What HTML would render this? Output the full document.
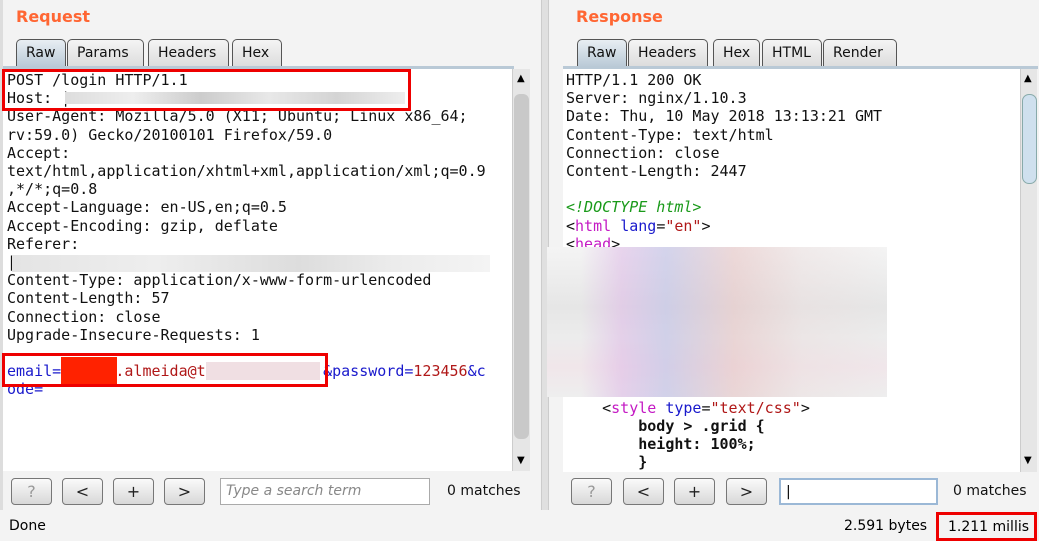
<!DOCTYPE html>
<html><head><style>
*{margin:0;padding:0;box-sizing:border-box}
body{width:1039px;height:541px;background:#f3f3f3;font-family:"DejaVu Sans","Liberation Sans",sans-serif;position:relative;overflow:hidden}
.a{position:absolute}
.title{color:#ff6633;font-weight:bold;font-size:16px}
.tab{position:absolute;top:39px;height:28px;border:1px solid #555;border-bottom:none;border-radius:5px 5px 0 0;background:linear-gradient(#f4f4f4,#dcdcdc);font-size:14px;padding:5px 9px 0;color:#111}
.tab.sel{background:linear-gradient(#e8eef3,#b9c9d6)}
.ed{position:absolute;background:#fff;font-family:"DejaVu Sans Mono","Liberation Mono",monospace;font-size:15px;line-height:18.2px;white-space:pre;color:#111;overflow:hidden}
.sb{position:absolute;background:#e6e6e6;border-left:1px solid #ccc}
.btn{position:absolute;top:478px;width:41px;height:27px;border:1px solid #777;border-radius:4px;background:linear-gradient(#fafafa,#d8d8d8);text-align:center;font-size:16px;line-height:25px;color:#222}
.inp{position:absolute;top:478px;height:27px;background:#fff;border:1px solid #aaa;font-size:14px;padding:4px 5px;font-style:italic;color:#888}
.m{position:absolute;top:483px;font-size:14px;color:#111}
.bl{color:#1a1acc}.rd{color:#b01818}.gr{color:#1a9a1a;font-style:italic}.pk{color:#c41ac4}
.px{position:absolute}
</style></head><body>
<div class="a" style="left:0;top:0;width:3px;height:510px;background:#ddd"></div>
<div class="a title" style="left:16px;top:7px">Request</div>
<div class="tab sel" style="left:16px;width:50px">Raw</div>
<div class="tab" style="left:67px;width:77px">Params</div>
<div class="tab" style="left:148px;width:81px">Headers</div>
<div class="tab" style="left:232px;width:50px">Hex</div>
<div class="a" style="left:3px;top:66px;width:511px;height:3px;background:#b9c9d6"></div>
<div class="ed" style="left:3px;top:69px;width:509px;height:402px;padding:2px 4px">POST /login HTTP/1.1
Host: |
User-Agent: Mozilla/5.0 (X11; Ubuntu; Linux x86_64;
rv:59.0) Gecko/20100101 Firefox/59.0
Accept:
text/html,application/xhtml+xml,application/xml;q=0.9
,*/*;q=0.8
Accept-Language: en-US,en;q=0.5
Accept-Encoding: gzip, deflate
Referer:
|
Content-Type: application/x-www-form-urlencoded
Content-Length: 57
Connection: close
Upgrade-Insecure-Requests: 1

<span class="bl">email=</span>      <span class="rd">.almeida@t</span>             <span class="bl">&amp;password=</span><span class="rd">123456</span><span class="bl">&amp;c
ode=</span></div>
<div class="px" style="left:65px;top:92px;width:340px;height:12px;background:linear-gradient(90deg,#ddd,#eee 20%,#ccc 40%,#e8e8e8 60%,#d4d4d4 80%,#eee)"></div>
<div class="px" style="left:12px;top:255px;width:478px;height:17px;background:linear-gradient(90deg,#e4e4e4,#eee 30%,#ddd 60%,#ececec 80%,#f4f4f4)"></div>
<div class="px" style="left:61px;top:357px;width:56px;height:28px;background:#ff2200"></div>
<div class="px" style="left:206px;top:362px;width:114px;height:18px;background:#f0dfe3"></div>
<div class="a" style="left:2px;top:69px;width:409px;height:42px;border:3px solid #ee0000"></div>
<div class="a" style="left:2px;top:353px;width:326px;height:34px;border:3px solid #ee0000"></div>
<div class="sb" style="left:512px;top:69px;width:18px;height:402px"><div class="a" style="left:1px;top:25px;width:15px;height:345px;background:#c9c9c9;border-radius:6px"></div><div class="a" style="left:4px;top:4px;font-size:10px">▲</div><div class="a" style="left:4px;top:386px;font-size:10px">▼</div></div>
<div class="btn" style="left:11px;color:#999">?</div>
<div class="btn" style="left:62px">&lt;</div>
<div class="btn" style="left:113px">+</div>
<div class="btn" style="left:164px">&gt;</div>
<div class="inp" style="left:220px;width:210px">Type a search term</div>
<div class="m" style="left:447px">0 matches</div>
<div class="a" style="left:9px;top:518px;font-size:14px">Done</div>

<div class="a" style="left:541px;top:0;width:8px;height:510px;background:#e0e0e0;border-left:1px solid #ccc;border-right:1px solid #ccc"></div>
<div class="a title" style="left:576px;top:7px">Response</div>
<div class="tab sel" style="left:577px;width:50px">Raw</div>
<div class="tab" style="left:628px;width:80px">Headers</div>
<div class="tab" style="left:713px;width:47px">Hex</div>
<div class="tab" style="left:762px;width:60px">HTML</div>
<div class="tab" style="left:823px;width:74px">Render</div>
<div class="a" style="left:563px;top:66px;width:475px;height:3px;background:#b9c9d6"></div>
<div class="ed" style="left:563px;top:69px;width:457px;height:403px;padding:2px 3px">HTTP/1.1 200 OK
Server: nginx/1.10.3
Date: Thu, 10 May 2018 13:13:21 GMT
Content-Type: text/html
Connection: close
Content-Length: 2447

<span class="gr">&lt;!DOCTYPE html&gt;</span>
&lt;<span class="pk">html</span> <span class="bl">lang</span>=<span class="rd">"en"</span>&gt;
&lt;<span class="pk">head</span>&gt;








    &lt;<span class="pk">style</span> <span class="bl">type</span>=<span class="rd">"text/css"</span>&gt;
<b>        body &gt; .grid {
        height: 100%;
        }</b></div>
<div class="px" style="left:547px;top:247px;width:340px;height:150px;background:
linear-gradient(90deg,transparent 0,transparent 10%,rgba(220,180,230,.5) 22%,rgba(190,190,230,.6) 35%,rgba(230,190,190,.5) 55%,rgba(235,220,220,.4) 75%,transparent 100%),
linear-gradient(180deg,#f4f4f4,#e6e6e6 40%,#ececec 60%,#f0e6ea 80%,#eee)"></div>
<div class="sb" style="left:1020px;top:69px;width:17px;height:403px"><div class="a" style="left:1px;top:25px;width:15px;height:90px;background:#cfe0ee;border:1px solid #8aa;border-radius:7px"></div><div class="a" style="left:3px;top:4px;font-size:10px">▲</div><div class="a" style="left:3px;top:386px;font-size:10px">▼</div></div>
<div class="btn" style="left:571px;color:#999">?</div>
<div class="btn" style="left:623px">&lt;</div>
<div class="btn" style="left:674px">+</div>
<div class="btn" style="left:726px">&gt;</div>
<div class="inp" style="left:779px;width:159px;border:2px solid #9bb8d6;color:#000;font-style:normal">|</div>
<div class="m" style="left:953px">0 matches</div>
<div class="a" style="left:844px;top:518px;font-size:14px">2.591 bytes</div>
<div class="a" style="left:936px;top:512px;width:101px;height:29px;border:3px solid #ee0000;font-size:14px;padding:4px 0 0 9px">1.211 millis</div>
</body></html>
